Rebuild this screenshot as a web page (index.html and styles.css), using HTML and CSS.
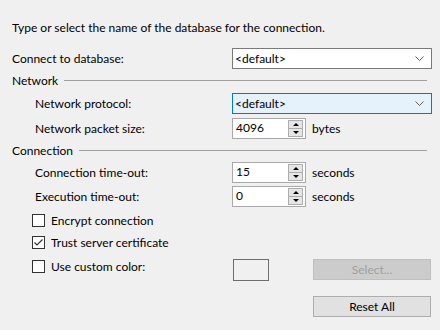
FILE: index.html
```html
<!DOCTYPE html>
<html lang="en">
<head>
  <meta charset="UTF-8">
  <title>Connection Properties</title>
  <link rel="stylesheet" href="styles.css">
</head>
<body>
  <div class="page">
    <div class="intro">Type or select the name of the database for the connection.</div>

    <div class="row row-db">
      <div class="label">Connect to database:</div>
      <div class="combo">
        <span>&lt;default&gt;</span>
        <svg class="chev" width="9" height="5" viewBox="0 0 9 5"><polyline points="0.5,0.5 4.5,4.5 8.5,0.5" fill="none" stroke="#606060" stroke-width="1"/></svg>
      </div>
    </div>

    <div class="group group-net"><span>Network</span><div class="rule"></div></div>

    <div class="row row-proto">
      <div class="label indent">Network protocol:</div>
      <div class="combo focused">
        <span>&lt;default&gt;</span>
        <svg class="chev" width="9" height="5" viewBox="0 0 9 5"><polyline points="0.5,0.5 4.5,4.5 8.5,0.5" fill="none" stroke="#606060" stroke-width="1"/></svg>
      </div>
    </div>

    <div class="row row-packet">
      <div class="label indent">Network packet size:</div>
      <div class="spin">
        <span class="value">4096</span>
        <div class="spin-btns">
          <div class="spin-btn"><div class="tri-up"></div></div>
          <div class="spin-btn"><div class="tri-down"></div></div>
        </div>
      </div>
      <div class="unit">bytes</div>
    </div>

    <div class="group group-conn"><span>Connection</span><div class="rule"></div></div>

    <div class="row row-conn">
      <div class="label indent">Connection time-out:</div>
      <div class="spin">
        <span class="value">15</span>
        <div class="spin-btns">
          <div class="spin-btn"><div class="tri-up"></div></div>
          <div class="spin-btn"><div class="tri-down"></div></div>
        </div>
      </div>
      <div class="unit">seconds</div>
    </div>

    <div class="row row-exec">
      <div class="label indent">Execution time-out:</div>
      <div class="spin">
        <span class="value">0</span>
        <div class="spin-btns">
          <div class="spin-btn"><div class="tri-up"></div></div>
          <div class="spin-btn"><div class="tri-down"></div></div>
        </div>
      </div>
      <div class="unit">seconds</div>
    </div>

    <div class="check check-encrypt">
      <div class="box"></div>
      <span>Encrypt connection</span>
    </div>

    <div class="check check-trust">
      <div class="box">
        <svg width="11" height="11" viewBox="0 0 11 11"><polyline points="1.5,5.5 4,8 9.5,2.5" fill="none" stroke="#333" stroke-width="1.2"/></svg>
      </div>
      <span>Trust server certificate</span>
    </div>

    <div class="row row-color">
      <div class="check">
        <div class="box"></div>
        <span>Use custom color:</span>
      </div>
      <div class="swatch"></div>
      <button class="btn" disabled>Select...</button>
    </div>

    <div class="row row-reset">
      <button class="btn">Reset All</button>
    </div>
  </div>
</body>
</html>
```

FILE: styles.css
```css
body {
  margin: 0;
  background-color: #f0f0f0;
  font-family: Lato, 'Liberation Sans', sans-serif;
  font-size: 12px;
  color: #000;
}
.page {
  padding: 20px 8px 0 12px;
  width: 420px;
}
.intro {
  line-height: 16px;
  height: 16px;
}
.row {
  display: flex;
  align-items: center;
  height: 21px;
}
.label {
  width: 220px;
}
.label.indent {
  padding-left: 23px;
  width: 197px;
}
.row-db { margin-top: 12px; }
.row-proto { margin-top: 5px; }
.row-packet { margin-top: 4px; }
.row-conn { margin-top: 4px; }
.row-exec { margin-top: 3px; }

.group {
  display: flex;
  align-items: center;
  height: 16px;
}
.group .rule {
  flex: 1;
  height: 1px;
  background-color: #a0a0a0;
  margin-left: 6px;
  margin-right: 5px;
}
.group-net { margin-top: 3px; }
.group-conn { margin-top: 3px; }

.combo {
  box-sizing: border-box;
  width: 200px;
  height: 21px;
  border: 1px solid #7a7a7a;
  background-color: #fff;
  display: flex;
  align-items: center;
  justify-content: space-between;
  padding: 0 7px 0 2px;
}
.combo.focused {
  border-color: #0078d7;
  background-color: #e5f1fb;
}

.spin {
  box-sizing: border-box;
  width: 74px;
  height: 21px;
  border: 1px solid #a9a9a9;
  background-color: #fff;
  display: flex;
  align-items: center;
  justify-content: space-between;
  padding: 1px 1px 1px 3px;
}
.spin .value {
  margin-top: -3px;
}
.spin-btns {
  display: flex;
  flex-direction: column;
  width: 15px;
  height: 17px;
  margin-right: 1px;
}
.spin-btn {
  flex: 1;
  box-sizing: border-box;
  border: 1px solid #adadad;
  background-color: #e6e6e6;
  display: flex;
  align-items: center;
  justify-content: center;
}
.spin-btn + .spin-btn {
  border-top: none;
}
.tri-up {
  width: 0;
  height: 0;
  border-left: 3px solid transparent;
  border-right: 3px solid transparent;
  border-bottom: 3px solid #000;
}
.tri-down {
  width: 0;
  height: 0;
  border-left: 3px solid transparent;
  border-right: 3px solid transparent;
  border-top: 3px solid #000;
}
.unit {
  margin-left: 6px;
}

.check {
  display: flex;
  align-items: center;
  height: 16px;
  padding-left: 20px;
}
.check .box {
  box-sizing: border-box;
  width: 13px;
  height: 13px;
  border: 1px solid #333;
  background-color: #fff;
  margin-right: 6px;
  display: flex;
  align-items: center;
  justify-content: center;
}
.check-encrypt { margin-top: 5px; }
.check-trust { margin-top: 6px; }

.row-color {
  margin-top: 9px;
  height: 22px;
  align-items: flex-start;
}
.row-color .check {
  width: 201px;
  height: 13px;
  margin-top: 1px;
}
.swatch {
  box-sizing: border-box;
  width: 36px;
  height: 22px;
  border: 1px solid #6d6d6d;
  background-color: #f0f0f0;
  margin-left: 0;
}
.btn {
  box-sizing: border-box;
  width: 118px;
  height: 21px;
  margin-left: 44px;
  border: 1px solid #adadad;
  background-color: #e1e1e1;
  font-family: Lato, 'Liberation Sans', sans-serif;
  font-size: 12px;
  color: #000;
  padding: 0;
}
.btn:disabled {
  background-color: #cccccc;
  border-color: #bfbfbf;
  color: #a0a0a0;
}
.row-reset {
  margin-top: 15px;
  justify-content: flex-end;
  padding-right: 1px;
}
.row-reset .btn {
  margin-left: 0;
}
```
